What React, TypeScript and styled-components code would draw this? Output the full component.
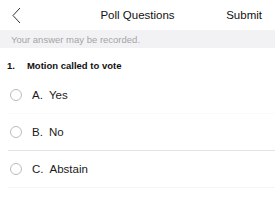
import React from "react";
import styled, { createGlobalStyle } from "styled-components";

const Global = createGlobalStyle`
  html, body { margin: 0; padding: 0; background: #fff; }
  body { font-family: "Liberation Sans", Arial, sans-serif; -webkit-font-smoothing: antialiased; }
`;

const Page = styled.div`
  width: 275px;
  height: 223px;
  background: #fff;
  overflow: hidden;
`;

const Header = styled.div`
  height: 30px;
  display: grid;
  grid-template-columns: 60px 1fr 60px;
  align-items: center;
`;

const Back = styled.div`
  padding-left: 12px;
  display: flex;
  align-items: center;
`;

const Title = styled.div`
  text-align: center;
  font-size: 11.5px;
  color: #111;
`;

const Submit = styled.div`
  text-align: right;
  padding-right: 13px;
  font-size: 11.5px;
  color: #111;
`;

const Banner = styled.div`
  height: 18px;
  background: #f2f2f4;
  color: #a4a4a8;
  font-size: 9.5px;
  display: flex;
  align-items: center;
  padding-left: 11px;
`;

const Question = styled.div`
  padding: 12px 0 0 7px;
  height: 17px;
  font-size: 9.5px;
  font-weight: 600;
  color: #111;
  display: flex;
  gap: 12px;
`;

const Options = styled.div`
  padding-left: 8px;
`;

const Option = styled.div<{ $divider?: string }>`
  height: 36px;
  display: flex;
  align-items: center;
  gap: 10px;
  padding-left: 2px;
  border-bottom: 1px solid ${(p) => p.$divider || "transparent"};
  font-size: 11.5px;
  color: #1a1a1a;
`;

const Radio = styled.div`
  width: 12px;
  height: 12px;
  border-radius: 50%;
  border: 1px solid #bcbcbc;
  box-sizing: border-box;
`;

const Label = styled.span`
  display: flex;
  gap: 6px;
`;

const options = [
  { letter: "A.", text: "Yes", divider: "#fafafa" },
  { letter: "B.", text: "No", divider: "#e3e3e3" },
  { letter: "C.", text: "Abstain", divider: "#f5f5f5" },
];

export default function App() {
  return (
    <Page>
      <Global />
      <Header>
        <Back>
          <svg width="9" height="17" viewBox="0 0 9 17">
            <path d="M8 1 L1 8.5 L8 16" fill="none" stroke="#333" strokeWidth="1" />
          </svg>
        </Back>
        <Title>Poll Questions</Title>
        <Submit>Submit</Submit>
      </Header>
      <Banner>Your answer may be recorded.</Banner>
      <Question>
        <span>1.</span>
        <span>Motion called to vote</span>
      </Question>
      <Options>
        {options.map((o) => (
          <Option key={o.letter} $divider={o.divider}>
            <Radio />
            <Label>
              <span>{o.letter}</span>
              <span>{o.text}</span>
            </Label>
          </Option>
        ))}
      </Options>
    </Page>
  );
}
